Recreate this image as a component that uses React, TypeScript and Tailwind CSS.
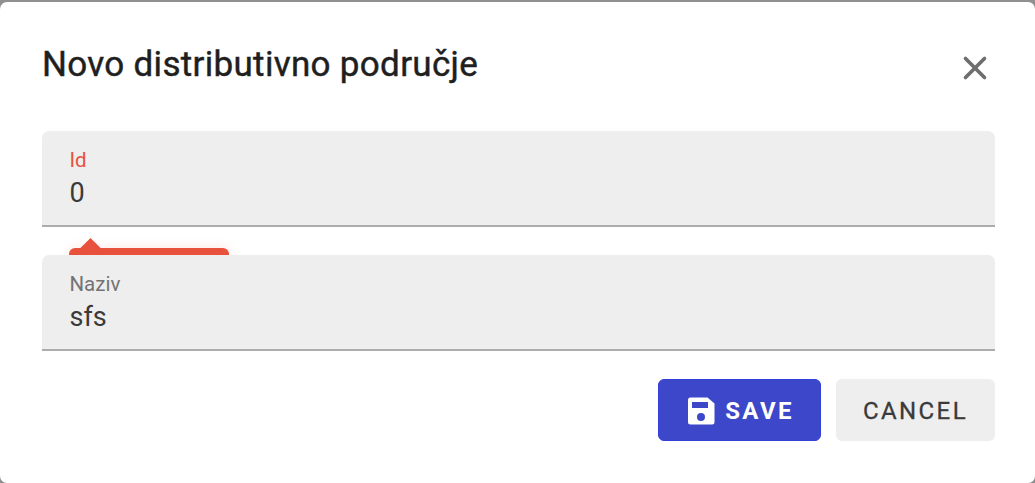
import { X } from 'lucide-react';

const fields = [
  { label: 'Id', value: '0', error: true },
  { label: 'Naziv', value: 'sfs', error: false },
];

function SaveIcon() {
  return (
    <svg viewBox="0 0 28 28" className="w-[28px] h-[28px]" fill="currentColor">
      <path
        fillRule="evenodd"
        d="M3.5 0.5H20.5L27.5 6.5V25A2.5 2.5 0 0 1 25 27.5H3.5A2.5 2.5 0 0 1 1 25V3A2.5 2.5 0 0 1 3.5 0.5ZM5 5V11H21V5ZM14 16A4 4 0 1 0 14 24A4 4 0 1 0 14 16Z"
      />
    </svg>
  );
}

export default function App() {
  return (
    <div className="w-[1035px] h-[483px] bg-[#8f8f8f] pt-[2px] overflow-hidden font-['Roboto',sans-serif]">
      <div className="h-[481px] bg-white rounded-[7px] pl-[42px] pr-[40px] flex flex-col">
        <div className="flex items-start justify-between h-[129px] pt-[41px]">
          <h1 className="text-[35px] leading-[44px] font-normal tracking-[0.31px] text-[#1f1f1f] [-webkit-text-stroke:0.45px_#1f1f1f]">
            Novo distributivno područje
          </h1>
          <button className="text-[#6e6e6e] mt-[6px] mr-[1px]">
            <X size={38} strokeWidth={2.3} />
          </button>
        </div>

        <div className="flex flex-col gap-[28px]">
          {fields.map((field) => (
            <div key={field.label} className="relative">
              <div className="relative z-10 h-[96px] bg-[#eeeeee] rounded-t-[7px] border-b-[2px] border-[#acacac] pl-[27.5px] pr-[28px] pt-[16px]">
                <div className={`text-[20.5px] leading-[26px] ${field.error ? 'text-[#e8513c]' : 'text-[#737373]'}`}>
                  {field.label}
                </div>
                <div className="text-[27px] leading-[38px] text-[#3a3a3a] mt-[1px]">{field.value}</div>
              </div>
              {field.error && (
                <div className="absolute left-[27px] top-[117px] w-[160px] h-[12px] bg-[#e8513c] rounded-t-[6px] shadow-[0_0_12px_rgba(232,81,60,0.15)]">
                  <div className="absolute left-[14px] top-[-7px] w-[15px] h-[15px] rotate-45 bg-[#e8513c]" />
                </div>
              )}
            </div>
          ))}
        </div>

        <div className="flex justify-end gap-[15px] mt-[28px]">
          <button className="w-[163px] h-[62px] pt-[1px] pl-[2px] flex items-center justify-center gap-[10px] bg-[#3d47c9] border border-[#3340d8] rounded-[6px] text-white text-[24px] font-bold tracking-[2.4px]">
            <SaveIcon />
            SAVE
          </button>
          <button className="w-[159px] h-[62px] pt-[1px] bg-[#eeeeee] rounded-[6px] text-[#3a3a3a] text-[24px] font-normal tracking-[2.4px] [-webkit-text-stroke:0.3px_#3a3a3a]">
            CANCEL
          </button>
        </div>
      </div>
    </div>
  );
}
